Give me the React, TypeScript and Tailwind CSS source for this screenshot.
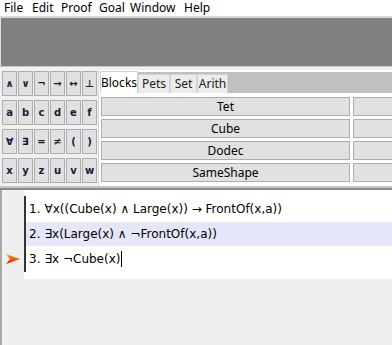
import React from 'react';

const symbolRows = [
  ['∧', '∨', '¬', '→', '↔', '⊥'],
  ['a', 'b', 'c', 'd', 'e', 'f'],
  ['∀', '∃', '=', '≠', '(', ')'],
  ['x', 'y', 'z', 'u', 'v', 'w'],
];

const menus = [
  { label: 'File', w: 'w-[28px]' },
  { label: 'Edit', w: 'w-[29px]' },
  { label: 'Proof', w: 'w-[38px]' },
  { label: 'Goal', w: 'w-[31px]' },
  { label: 'Window', w: 'w-[54px]' },
  { label: 'Help', w: 'w-[40px]' },
];

const tabs = [
  { label: 'Blocks', w: 'w-[38px]', active: true },
  { label: 'Pets', w: 'w-[32px]' },
  { label: 'Set', w: 'w-[27px]' },
  { label: 'Arith', w: 'w-[31px]' },
];

const blocks = ['Tet', 'Cube', 'Dodec', 'SameShape'];

const proofLines = [
  { n: '1.', text: '∀x((Cube(x) ∧ Large(x)) → FrontOf(x,a))' },
  { n: '2.', text: '∃x(Large(x) ∧ ¬FrontOf(x,a))', selected: true },
  { n: '3.', text: '∃x ¬Cube(x)', current: true },
];

const Pointer = () => (
  <svg width="14" height="10" viewBox="0 0 14 10">
    <defs>
      <linearGradient id="ptr" x1="0" y1="0" x2="0" y2="1">
        <stop offset="0" stopColor="#ff9a30" />
        <stop offset="0.5" stopColor="#f05a10" />
        <stop offset="1" stopColor="#b02800" />
      </linearGradient>
    </defs>
    <path d="M0 0 L14 5 L0 10 L4 5 Z" fill="url(#ptr)" />
  </svg>
);

const App = () => {
  return (
    <div className="w-[392px] h-[345px] overflow-hidden bg-white flex flex-col font-['DejaVu_Sans',sans-serif] text-black">
      {/* menu bar */}
      <div className="h-[16px] flex items-center pl-[4px] text-[12px] font-['Noto_Sans',sans-serif] leading-none">
        {menus.map((m) => (
          <div key={m.label} className={`${m.w} shrink-0`}>
            {m.label}
          </div>
        ))}
      </div>

      {/* toolbar area */}
      <div className="h-[2px] bg-[#d6d6d6]" />
      <div className="h-[48px] bg-[#808080] border-l border-[#e0e0e0]" />
      <div className="h-[4px] bg-[#f0f0f0] border-t border-[#c8c8c8]" />

      {/* palette */}
      <div className="h-[116px] flex bg-[#f0f0f0]">
        <div className="pl-[2px] pt-[1px] flex flex-col gap-[4px] w-[98px]">
          {symbolRows.map((row, i) => (
            <div key={i} className="flex gap-[1px]">
              {row.map((s) => (
                <div
                  key={s}
                  className="w-[15px] h-[25px] bg-[#e1e1e1] border border-[#adadad] flex items-center justify-center text-[10px] font-semibold text-[#1a1a40]"
                >
                  {s}
                </div>
              ))}
            </div>
          ))}
        </div>
        <div className="w-[1px] bg-[#d8d8d8]" />
        <div className="flex-1 flex flex-col bg-white pl-[1px]">
          <div className="h-[23px] flex items-end bg-[#c0c0c0] border-t-2 border-white text-[12px] font-['Noto_Sans',sans-serif]">
            {tabs.map((t) =>
              t.active ? (
                <div
                  key={t.label}
                  className={`${t.w} h-[22px] bg-white border border-b-0 border-[#d0d0d0] flex items-center justify-center`}
                >
                  {t.label}
                </div>
              ) : (
                <div
                  key={t.label}
                  className={`${t.w} h-[19px] bg-[#ececec] border border-b-0 border-[#d4d4d4] flex items-center justify-center text-[#222]`}
                >
                  {t.label}
                </div>
              ),
            )}
          </div>
          <div className="flex flex-col gap-[3px] pt-[4px] pl-[1px]">
            {blocks.map((b) => (
              <div key={b} className="flex gap-[3px]">
                <div className="w-[249px] h-[19px] bg-[#e1e1e1] border border-[#adadad] flex items-center justify-center text-[12px] font-['Noto_Sans',sans-serif]">
                  {b}
                </div>
                <div className="flex-1 h-[19px] bg-[#e1e1e1] border border-[#adadad] border-r-0" />
              </div>
            ))}
          </div>
        </div>
      </div>

      {/* splitter */}
      <div className="h-[2px] bg-[#c4c4c4]" />
      <div className="h-[2px] bg-[#8a8a8a]" />

      {/* proof area */}
      <div className="flex-1 flex bg-[#efefef]">
        <div className="w-[24px] border-l-2 border-[#a8a8a8] flex flex-col pt-[6px]">
          <div className="h-[26px]" />
          <div className="h-[24px]" />
          <div className="h-[26px] flex items-center pl-[4px]">
            <Pointer />
          </div>
        </div>
        <div className="flex-1 flex flex-col">
          <div className="bg-white pt-[6px] pb-[7px]">
            <div className="border-l-2 border-[#333] text-[12px]">
              {proofLines.map((l) => (
                <div
                  key={l.n}
                  className={`flex items-center pl-[3px] whitespace-nowrap ${
                    l.selected ? 'h-[24px] bg-[#e6e6fa]' : 'h-[26px]'
                  }`}
                >
                  <span className="mr-[4px]">{l.n}</span>
                  <span>{l.text}</span>
                  {l.current && <span className="w-[1px] h-[16px] bg-black ml-[1px]" />}
                </div>
              ))}
            </div>
          </div>
        </div>
      </div>
    </div>
  );
};

export default App;
